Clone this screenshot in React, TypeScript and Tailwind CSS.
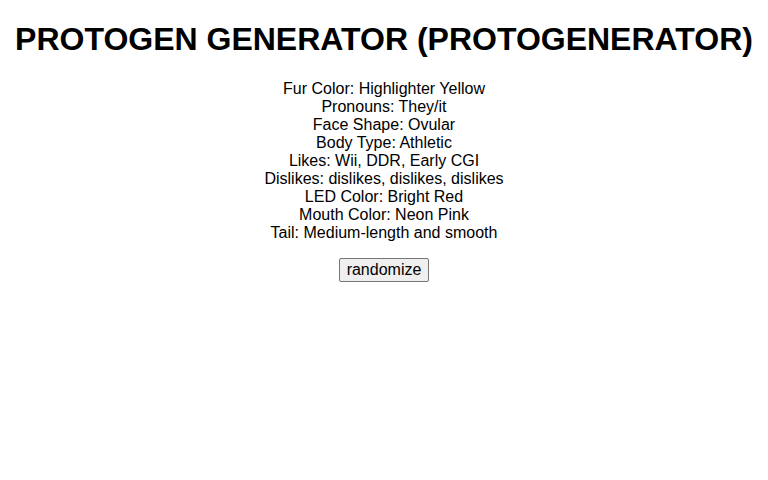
import React from "react";

const lines = [
  "Fur Color: Highlighter Yellow",
  "Pronouns: They/it",
  "Face Shape: Ovular",
  "Body Type: Athletic",
  "Likes: Wii, DDR, Early CGI",
  "Dislikes: dislikes, dislikes, dislikes",
  "LED Color: Bright Red",
  "Mouth Color: Neon Pink",
  "Tail: Medium-length and smooth",
];

export default function App() {
  return (
    <div className="w-[768px] h-[480px] bg-white text-black text-center" style={{ fontFamily: '"Liberation Sans", Arial, sans-serif' }}>
      <div className="h-[21px]" />
      <h1 className="text-[32px] leading-[37px] font-bold">PROTOGEN GENERATOR (PROTOGENERATOR)</h1>
      <div className="mt-[22px] text-[16px] leading-[18px] flex flex-col items-center">
        {lines.map((l) => (
          <div key={l}>{l}</div>
        ))}
      </div>
      <div className="mt-[16px] flex justify-center">
        <button className="px-[7px] py-[1px] border border-[#767676] bg-[#efefef] rounded-[2px] text-[16px] leading-[20px] text-black">
          randomize
        </button>
      </div>
    </div>
  );
}
